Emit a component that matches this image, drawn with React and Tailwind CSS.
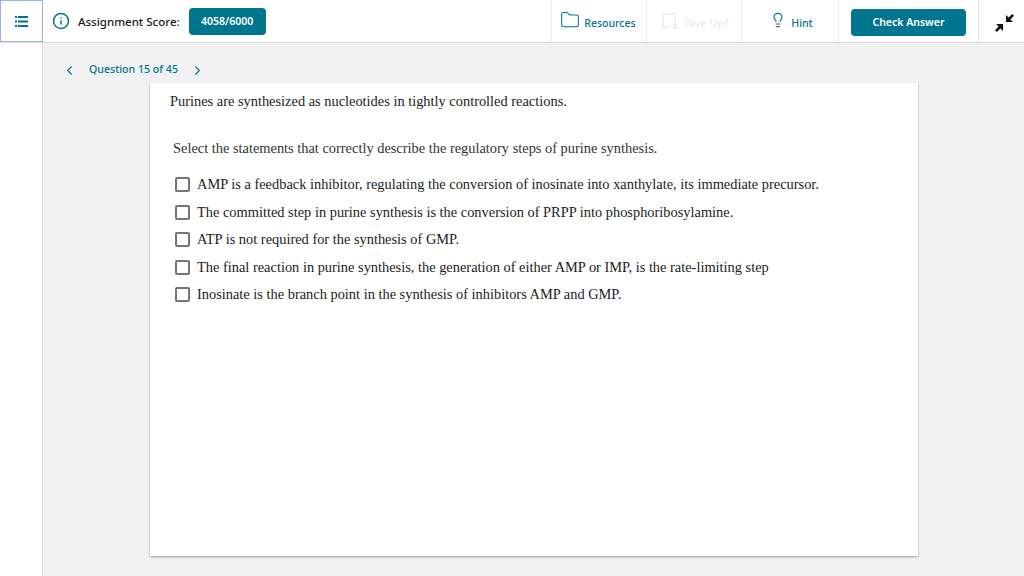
import { ChevronLeft, ChevronRight, Folder, Info, Lightbulb } from "lucide-react";

const options = [
  "AMP is a feedback inhibitor, regulating the conversion of inosinate into xanthylate, its immediate precursor.",
  "The committed step in purine synthesis is the conversion of PRPP into phosphoribosylamine.",
  "ATP is not required for the synthesis of GMP.",
  "The final reaction in purine synthesis, the generation of either AMP or IMP, is the rate-limiting step",
  "Inosinate is the branch point in the synthesis of inhibitors AMP and GMP.",
];

function ListIcon() {
  return (
    <svg width="13" height="13" viewBox="0 0 13 13" fill="#00758e">
      <rect x="0" y="1" width="2" height="2" />
      <rect x="3" y="1" width="10" height="2" />
      <rect x="0" y="5.5" width="2" height="2" />
      <rect x="3" y="5.5" width="10" height="2" />
      <rect x="0" y="10" width="2" height="2" />
      <rect x="3" y="10" width="10" height="2" />
    </svg>
  );
}

function GiveUpIcon() {
  return (
    <svg width="18" height="17" viewBox="0 0 18 17" fill="none" stroke="#ececec" strokeWidth="1.5">
      <path d="M13 10V1H1v13h7" />
      <path d="M11 11l4 5M15 11l-4 5" />
    </svg>
  );
}

function CollapseIcon() {
  return (
    <svg width="20" height="20" viewBox="0 0 20 20" fill="#111">
      <path d="M11 2v7h7l-2.6-2.6L19 2.8 17.2 1l-3.6 3.6z" />
      <path d="M1 11h7v7l-2.6-2.6L1.8 19 0 17.2l3.6-3.6z" />
    </svg>
  );
}

export default function App() {
  return (
    <div className="h-[576px] w-[1024px] overflow-hidden bg-[#f1f1f1] font-['Noto_Sans',sans-serif]">
      <header className="flex h-[43px] items-stretch border-b border-[#dcdcdc] bg-white">
        <button className="flex w-[43px] items-center justify-center border border-[#8fb4f0]">
          <ListIcon />
        </button>
        <div className="flex items-center pl-[9px]">
          <Info size={18} strokeWidth={2} className="text-[#00758e]" />
          <span className="ml-[8px] mt-[1px] text-[11.5px] font-medium text-[#1a1a1a]">Assignment Score:</span>
          <span className="ml-[9px] flex h-[27px] w-[77px] items-center justify-center rounded-sm bg-[#00758e] pt-[2px] text-[10.5px] font-semibold text-white">
            4058/6000
          </span>
        </div>
        <div className="ml-auto flex items-stretch">
          <div className="flex w-[96px] items-center justify-center gap-[4px] border-x border-[#ececec] pr-[2px]">
            <Folder size={20} strokeWidth={1.25} className="mb-[3px] text-[#00758e]" />
            <span className="mt-[5px] text-[10.5px] font-medium text-[#00758e]">Resources</span>
          </div>
          <div className="flex w-[95px] items-center justify-center gap-[5px] border-r border-[#ececec] pl-[2px]">
            <GiveUpIcon />
            <span className="mt-[5px] text-[10.5px] font-medium text-[#ececec]">Give Up?</span>
          </div>
          <div className="flex w-[97px] items-center justify-center gap-[5px] border-r border-[#ececec] pl-[3px]">
            <Lightbulb size={16} strokeWidth={1.75} className="mb-[3px] text-[#00758e]" />
            <span className="mt-[5px] text-[10.5px] font-medium text-[#00758e]">Hint</span>
          </div>
          <div className="flex w-[140px] items-center justify-center border-r border-[#e4e4e4] pt-[2px]">
            <button className="h-[27px] w-[115px] rounded-sm bg-[#00758e] pt-[2px] text-[10.5px] font-semibold text-white">
              Check Answer
            </button>
          </div>
          <div className="flex w-[45px] items-center justify-center pl-[6px] pt-[4px]">
            <CollapseIcon />
          </div>
        </div>
      </header>

      <div className="flex h-[533px]">
        <aside className="w-[43px] border-r border-[#dcdcdc] bg-white" />
        <main className="flex-1">
          <nav className="flex h-[40px] items-center pl-[19px] pt-[14px] text-[#00758e]">
            <ChevronLeft size={15} strokeWidth={1.75} />
            <span className="ml-[12px] text-[10.6px] font-medium">Question 15 of 45</span>
            <ChevronRight size={15} strokeWidth={1.75} className="ml-[12px]" />
          </nav>
          <section className="ml-[107px] h-[473px] w-[768px] bg-white pl-[20px] pt-[10px] font-['Liberation_Serif',serif] text-[14.4px] text-[#1c1c1c] shadow-[0_1px_2px_rgba(0,0,0,0.35)]">
            <p className="leading-[17px]">Purines are synthesized as nucleotides in tightly controlled reactions.</p>
            <p className="ml-[3px] mt-[30px] leading-[17px] text-[#333]">
              Select the statements that correctly describe the regulatory steps of purine synthesis.
            </p>
            <ul className="ml-[5px] mt-[14px]">
              {options.map((text) => (
                <li key={text} className="flex h-[27.5px] items-center gap-[7px]">
                  <span className="h-[15px] w-[15px] shrink-0 rounded-[2px] border-2 border-[#757575] bg-white" />
                  <span className="pt-[1px]">{text}</span>
                </li>
              ))}
            </ul>
          </section>
        </main>
      </div>
    </div>
  );
}
